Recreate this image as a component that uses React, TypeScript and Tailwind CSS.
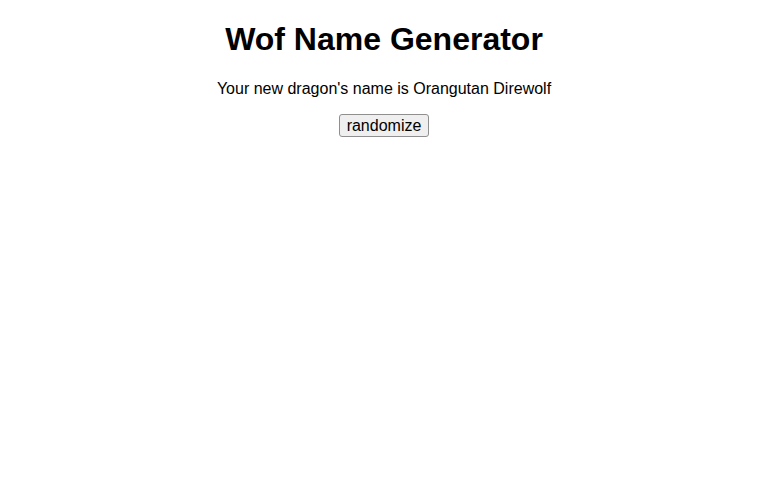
import { useState } from 'react';

const firstNames = ['Orangutan', 'Moonwatcher', 'Glory', 'Clay', 'Sunny', 'Starflight', 'Tsunami'];
const lastNames = ['Direwolf', 'Nightwing', 'Rainwing', 'Skywing', 'Mudwing', 'Icewing', 'Seawing'];

const pick = (list: string[]) => list[Math.floor(Math.random() * list.length)];

const App = () => {
  const [name, setName] = useState('Orangutan Direwolf');

  const handleRandomize = () => {
    setName(`${pick(firstNames)} ${pick(lastNames)}`);
  };

  return (
    <div className="min-h-screen bg-white text-center text-black font-['Liberation_Sans',Arial,sans-serif] flow-root">
      <h1 className="text-[32px] font-bold leading-[37px] my-[21.44px]">Wof Name Generator</h1>
      <p className="text-base leading-[18px] my-4">Your new dragon's name is {name}</p>
      <div className="mt-4 flex justify-center">
        <button
          onClick={handleRandomize}
          className="text-base leading-[19px] px-[7px] py-[1px] bg-[#efefef] border border-[#8f8f8f] rounded-[3px] text-black hover:bg-[#e5e5e5]"
        >
          randomize
        </button>
      </div>
    </div>
  );
};

export default App;
